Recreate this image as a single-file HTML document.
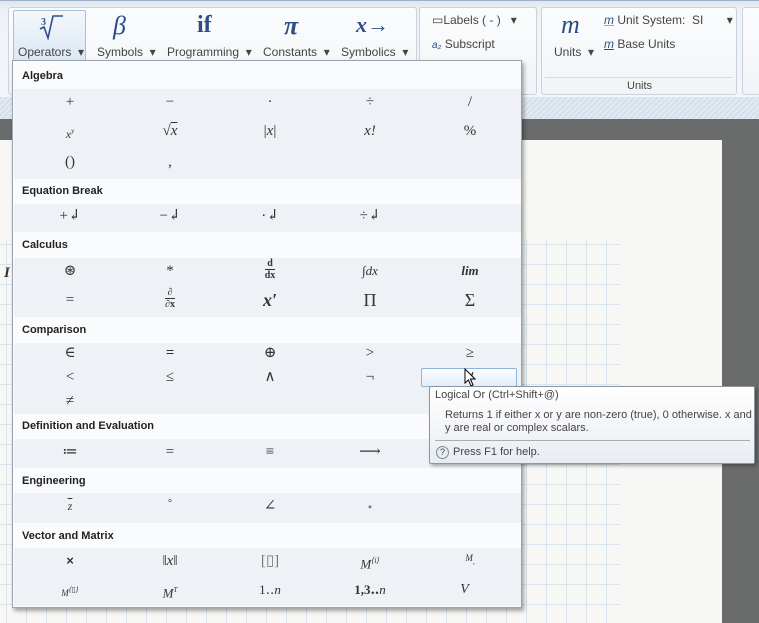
<!DOCTYPE html>
<html><head><meta charset="utf-8"><style>
*{margin:0;padding:0;box-sizing:border-box}
body{width:759px;height:623px;overflow:hidden;position:relative;background:#fff;font-family:"Liberation Sans",sans-serif;font-size:12px;color:#333}
.a{position:absolute}
.rib{left:0;top:0;width:759px;height:97px;background:linear-gradient(#dfe6ee,#eef2f6 10%,#f4f6f9);border-top:1px solid #9fb1c6}
.grp{border:1px solid #c9d2dc;border-radius:3px;background:linear-gradient(#fbfcfd,#f1f4f7)}
.btn{text-align:center;color:#444;font-size:12px}
.ico{font-family:"Liberation Serif",serif;color:#2d4f86;font-size:26px}
.dd{left:12px;top:60px;width:510px;height:548px;background:#fafbfc;border:1px solid #9aa3ad;box-shadow:2px 3px 4px rgba(0,0,0,.35)}
.h{position:absolute;left:9px;font-weight:bold;font-size:11px;color:#222}
.band{position:absolute;left:1px;width:507px;background:#eef1f5}
.c{position:absolute;width:100px;text-align:center;font-family:"Liberation Serif","DejaVu Serif",serif;font-size:15px;color:#333;line-height:20px}
.i{font-style:italic}
</style></head><body>
<div class="a" style="left:0;top:97px;width:759px;height:22px;background:repeating-linear-gradient(135deg,#d6e0ea 0 2px,#e2eaf2 2px 4px)"></div>
<div class="a" style="left:0;top:119px;width:759px;height:504px;background:#6a6b6b"></div>
<div class="a" style="left:0;top:140px;width:722px;height:483px;background:#f7f8f6"></div>
<div class="a" style="left:0;top:240px;width:620px;height:383px;background-image:linear-gradient(90deg,#d9e5ee 1px,transparent 1px),linear-gradient(#d9e5ee 1px,transparent 1px);background-size:20px 20px;background-position:6px 4px"></div>
<div class="a" style="left:4px;top:265px;font-family:'Liberation Serif',serif;font-style:italic;font-weight:bold;font-size:15px">I</div>
<div class="a rib"></div>
<div class="a grp" style="left:8px;top:7px;width:409px;height:88px"></div>
<div class="a" style="left:13px;top:10px;width:73px;height:52px;border:1px solid #a9bfd6;border-radius:2px;background:linear-gradient(#f4f8fc,#dbe7f3)"></div>
<svg class="a" style="left:38px;top:14px" width="26" height="26" viewBox="0 0 26 26"><path d="M2 15 L6 13 L10 24 L15 2 L25 2" fill="none" stroke="#2d4f86" stroke-width="1.6"/><text x="3" y="11" font-family="Liberation Serif" font-size="10" font-weight="bold" fill="#2d4f86">3</text></svg>
<div class="a btn" style="left:18px;top:45px">Operators &nbsp;▾</div>
<div class="a ico i" style="left:113px;top:11px">β</div>
<div class="a btn" style="left:97px;top:45px">Symbols &nbsp;▾</div>
<div class="a ico" style="left:197px;top:12px;font-weight:bold;font-size:24px">if</div>
<div class="a btn" style="left:167px;top:45px">Programming &nbsp;▾</div>
<div class="a ico i" style="left:284px;top:11px;font-weight:bold">π</div>
<div class="a btn" style="left:263px;top:45px">Constants &nbsp;▾</div>
<div class="a ico i" style="left:356px;top:12px;font-size:22px;font-weight:bold">x→</div>
<div class="a btn" style="left:341px;top:45px">Symbolics &nbsp;▾</div>
<div class="a grp" style="left:419px;top:7px;width:118px;height:88px"></div>
<div class="a btn" style="left:432px;top:13px">▭Labels ( - ) &nbsp;&nbsp;▾</div>
<div class="a btn" style="left:432px;top:37px"><span style="color:#2d4f86;font-style:italic;font-size:10px">a₂</span> Subscript</div>
<div class="a grp" style="left:541px;top:7px;width:196px;height:88px"></div>
<div class="a" style="left:545px;top:77px;width:188px;border-top:1px solid #d5dce4"></div>
<div class="a btn" style="left:627px;top:80px;font-size:11px">Units</div>
<div class="a ico i" style="left:561px;top:10px;font-size:26px">m</div>
<div class="a btn" style="left:554px;top:45px">Units &nbsp;▾</div>
<div class="a btn" style="left:604px;top:13px"><span style="color:#2d4f86;font-style:italic;text-decoration:underline #d4a93a">m</span> Unit System: &nbsp;SI &nbsp;&nbsp;&nbsp;&nbsp;&nbsp;&nbsp;▾</div>
<div class="a btn" style="left:604px;top:37px"><span style="color:#2d4f86;font-style:italic;text-decoration:underline">m</span> Base Units</div>
<div class="a grp" style="left:742px;top:7px;width:30px;height:88px"></div>
<div class="a dd">
<div class="h" style="top:9px">Algebra</div>
<div class="band" style="top:28px;height:90px"></div>
<div class="h" style="top:124px">Equation Break</div>
<div class="band" style="top:143px;height:28px"></div>
<div class="h" style="top:178px">Calculus</div>
<div class="band" style="top:197px;height:59px"></div>
<div class="h" style="top:263px">Comparison</div>
<div class="band" style="top:282px;height:71px"></div>
<div class="h" style="top:359px">Definition and Evaluation</div>
<div class="band" style="top:378px;height:29px"></div>
<div class="h" style="top:414px">Engineering</div>
<div class="band" style="top:432px;height:30px"></div>
<div class="h" style="top:469px">Vector and Matrix</div>
<div class="band" style="top:487px;height:58px"></div>
<div class="a" style="left:408px;top:307px;width:96px;height:19px;border:1px solid #8cb4d6;border-radius:2px;background:linear-gradient(#fbfdff,#e2eef9)"></div>
</div>
<div class="a" style="left:0;top:0">
<div class="c" style="left:20px;top:92px">+</div><div class="c" style="left:120px;top:92px">−</div><div class="c" style="left:220px;top:92px">·</div><div class="c" style="left:320px;top:92px">÷</div><div class="c" style="left:420px;top:92px">/</div>
<div class="c i" style="left:20px;top:121px;font-size:12px">x<sup style="font-size:7px">y</sup></div><div class="c" style="left:120px;top:121px">√<span class="i" style="text-decoration:overline">x</span></div><div class="c" style="left:220px;top:121px">|<span class="i">x</span>|</div><div class="c i" style="left:320px;top:121px">x!</div><div class="c" style="left:420px;top:121px">%</div>
<div class="c" style="left:20px;top:152px">()</div><div class="c" style="left:120px;top:152px">,</div>
<div class="c" style="left:20px;top:206px">+↲</div><div class="c" style="left:120px;top:206px">−↲</div><div class="c" style="left:220px;top:206px">·↲</div><div class="c" style="left:320px;top:206px">÷↲</div>
<div class="c" style="left:20px;top:261px">⊛</div><div class="c" style="left:120px;top:261px">*</div><div class="c" style="left:220px;top:258px;font-size:10px;line-height:12px;font-weight:bold">d<br><span style="border-top:1px solid #333">dx</span></div><div class="c i" style="left:320px;top:261px;font-size:13px">∫dx</div><div class="c i" style="left:420px;top:261px;font-size:13px;font-weight:bold">lim</div>
<div class="c" style="left:20px;top:290px">=</div><div class="c" style="left:120px;top:287px;font-size:10px;line-height:12px;font-weight:bold">∂<br><span style="border-top:1px solid #333">∂x</span></div><div class="c i" style="left:220px;top:290px;font-size:18px;font-weight:bold">x′</div><div class="c" style="left:320px;top:290px;font-size:18px">Π</div><div class="c" style="left:420px;top:290px;font-size:18px">Σ</div>
<div class="c" style="left:20px;top:343px">∈</div><div class="c" style="left:120px;top:343px;font-weight:bold">=</div><div class="c" style="left:220px;top:343px">⊕</div><div class="c" style="left:320px;top:343px">&gt;</div><div class="c" style="left:420px;top:343px">≥</div>
<div class="c" style="left:20px;top:367px">&lt;</div><div class="c" style="left:120px;top:367px">≤</div><div class="c" style="left:220px;top:367px">∧</div><div class="c" style="left:320px;top:367px">¬</div><div class="c" style="left:420px;top:367px">∨</div>
<div class="c" style="left:20px;top:391px">≠</div>
<div class="c" style="left:20px;top:442px">≔</div><div class="c" style="left:120px;top:442px">=</div><div class="c" style="left:220px;top:442px">≡</div><div class="c" style="left:320px;top:442px">⟶</div>
<div class="c i" style="left:20px;top:496px;font-size:12px;text-decoration:overline">z</div><div class="c" style="left:120px;top:494px;font-size:10px">°</div><div class="c" style="left:220px;top:496px">∠</div><div class="c" style="left:320px;top:498px;font-size:10px">∘</div>
<div class="c" style="left:20px;top:551px;font-family:'Liberation Sans';font-weight:bold;font-size:13px">×</div><div class="c" style="left:120px;top:551px">‖<span class="i">x</span>‖</div><div class="c" style="left:220px;top:551px;color:#777">[▯]</div><div class="c i" style="left:320px;top:551px;font-size:13px">M<sup style="font-size:8px">⟨i⟩</sup></div><div class="c i" style="left:420px;top:548px;font-size:9px">M<sub>,</sub></div>
<div class="c i" style="left:20px;top:580px;font-size:9px">M<sup>⟨▯⟩</sup></div><div class="c i" style="left:120px;top:580px;font-size:13px">M<sup style="font-size:7px">T</sup></div><div class="c" style="left:220px;top:580px;font-size:13px">1‥<span class="i">n</span></div><div class="c" style="left:320px;top:580px;font-size:13px;font-weight:bold">1,3‥<span class="i" style="font-weight:normal">n</span></div><div class="c i" style="left:420px;top:580px;font-size:14px">V⃗</div>
</div>
<svg class="a" style="left:464px;top:368px" width="14" height="20" viewBox="0 0 14 20"><path d="M1 1 L1 15 L4.5 12 L7 18 L9 17 L6.5 11 L11 11 Z" fill="#fff" stroke="#000" stroke-width="1"/></svg>
<div class="a" style="left:429px;top:386px;width:326px;height:78px;background:linear-gradient(#fff,#e9ecf2);border:1px solid #8e969f;border-radius:2px;box-shadow:2px 2px 3px rgba(0,0,0,.3);font-size:11px;color:#444">
<div class="a" style="left:5px;top:2px;font-size:11px">Logical Or (Ctrl+Shift+@)</div>
<div class="a" style="left:15px;top:22px;width:310px;line-height:13px">Returns 1 if either x or y are non-zero (true), 0 otherwise. x and y are real or complex scalars.</div>
<div class="a" style="left:5px;top:53px;width:315px;border-top:1px solid #a8adb3"></div>
<div class="a" style="left:6px;top:59px;width:13px;height:13px;border:1px solid #7b8896;border-radius:50%;text-align:center;font-size:9px;line-height:11px;background:#e6edf4">?</div>
<div class="a" style="left:23px;top:59px">Press F1 for help.</div>
</div>
</body></html>
